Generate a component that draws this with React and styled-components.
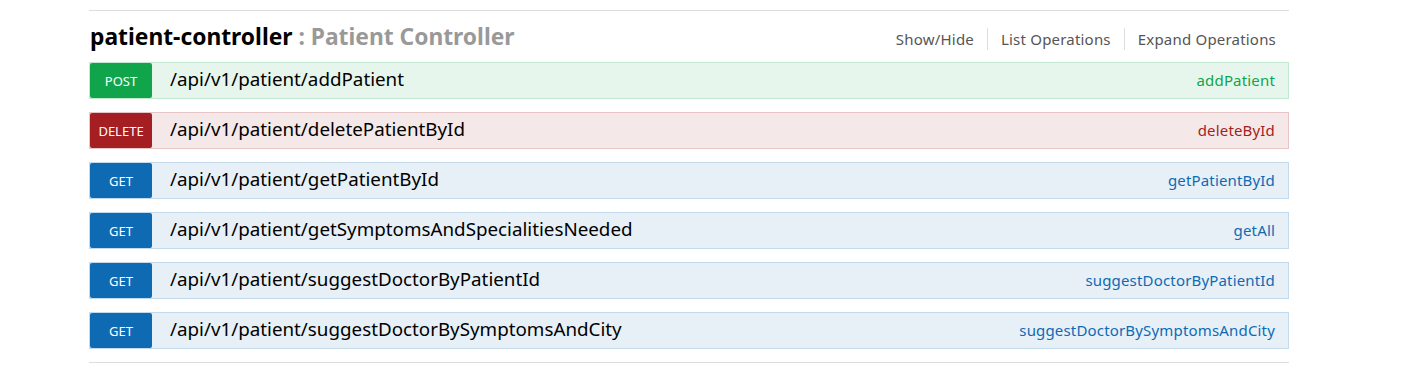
import React from "react";
import styled, { createGlobalStyle } from "styled-components";

const Global = createGlobalStyle`
  html, body { margin: 0; padding: 0; background: #fff; }
  body { font-family: "Noto Sans", "Open Sans", sans-serif; }
`;

const METHODS = {
  POST: { badge: "#10a54a", bg: "#e7f6ec", border: "#c3e8d1" },
  DELETE: { badge: "#a41e22", bg: "#f5e8e8", border: "#e8c6c7" },
  GET: { badge: "#0f6ab4", bg: "#e7f0f7", border: "#c3d9ec" },
};

const Page = styled.div`
  padding: 10px 0 0 89px;
`;

const Resource = styled.section`
  width: 1200px;
  border-top: 1px solid #ddd;
  border-bottom: 1px solid #ddd;
  padding-bottom: 13px;
`;

const Heading = styled.div`
  display: flex;
  align-items: center;
  justify-content: space-between;
  height: 51px;
`;

const Title = styled.h2`
  margin: 0;
  padding: 0 0 1px 1px;
  font-size: 22.8px;
  font-weight: bold;
  color: #000;
`;

const TitleDesc = styled.span`
  color: #999;
`;

const Options = styled.ul`
  display: flex;
  list-style: none;
  margin: 4px 13px 0 0;
  padding: 0;
`;

const Option = styled.li`
  font-size: 15px;
  letter-spacing: 0.2px;
  color: #555;
  padding: 0 13px;
  line-height: 22px;
  border-left: 1px solid #ddd;
  &:first-child { border-left: none; padding-left: 0; }
  &:last-child { padding-right: 0; }
`;

const Endpoints = styled.div`
  display: flex;
  flex-direction: column;
  gap: 13px;
`;

const Row = styled.div`
  display: flex;
  align-items: center;
  height: 35px;
  border: 1px solid ${(p) => METHODS[p.$method].border};
  background: ${(p) => METHODS[p.$method].bg};
`;

const Badge = styled.span`
  display: flex;
  align-items: center;
  justify-content: center;
  width: 62px;
  height: 35px;
  background: ${(p) => METHODS[p.$method].badge};
  color: #fff;
  font-size: 13px;
  border-radius: 2px;
  flex: none;
`;

const Path = styled.span`
  margin-left: 18px;
  font-size: 18.8px;
  color: #000;
  flex: 1;
  padding-bottom: 3px;
`;

const OpLink = styled.span`
  margin-right: 13px;
  font-size: 15px;
  letter-spacing: 0.17px;
  color: ${(p) => METHODS[p.$method].badge};
  padding-bottom: 2px;
`;

const ops = [
  ["POST", "/api/v1/patient/addPatient", "addPatient"],
  ["DELETE", "/api/v1/patient/deletePatientById", "deleteById"],
  ["GET", "/api/v1/patient/getPatientById", "getPatientById"],
  ["GET", "/api/v1/patient/getSymptomsAndSpecialitiesNeeded", "getAll"],
  ["GET", "/api/v1/patient/suggestDoctorByPatientId", "suggestDoctorByPatientId"],
  ["GET", "/api/v1/patient/suggestDoctorBySymptomsAndCity", "suggestDoctorBySymptomsAndCity"],
];

export default function App() {
  return (
    <Page>
      <Global />
      <Resource>
        <Heading>
          <Title>
            patient-controller <TitleDesc>: Patient Controller</TitleDesc>
          </Title>
          <Options>
            <Option>Show/Hide</Option>
            <Option>List Operations</Option>
            <Option>Expand Operations</Option>
          </Options>
        </Heading>
        <Endpoints>
          {ops.map(([m, p, n]) => (
            <Row key={p} $method={m}>
              <Badge $method={m}>{m}</Badge>
              <Path>{p}</Path>
              <OpLink $method={m}>{n}</OpLink>
            </Row>
          ))}
        </Endpoints>
      </Resource>
    </Page>
  );
}
